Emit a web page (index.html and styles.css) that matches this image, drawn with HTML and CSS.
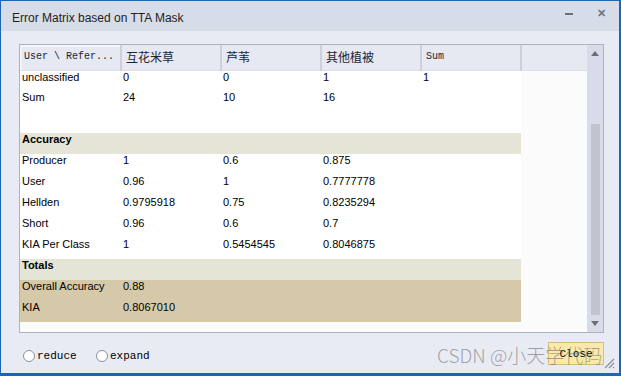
FILE: index.html
```html
<!DOCTYPE html>
<html lang="en">
<head>
    <meta charset="UTF-8">
    <title>Error Matrix based on TTA Mask</title>
    <link rel="stylesheet" href="styles.css">
</head>
<body>
    <div class="window">
        <div class="titlebar">
            <span class="title">Error Matrix based on TTA Mask</span>
            <span class="win-btn min"></span>
            <span class="win-btn close">&#x2715;</span>
        </div>

        <div class="content">
            <div class="grid">
                <div class="grid-main">
                    <table class="matrix">
                        <colgroup>
                            <col class="c-first"><col class="c"><col class="c"><col class="c"><col class="c"><col class="c-fill">
                        </colgroup>
                        <thead>
                            <tr>
                                <th class="mono">User \ Refer...</th>
                                <th class="cjk">互花米草</th>
                                <th class="cjk">芦苇</th>
                                <th class="cjk">其他植被</th>
                                <th class="mono">Sum</th>
                                <th class="fill"></th>
                            </tr>
                        </thead>
                        <tbody>
                            <tr><td>unclassified</td><td>0</td><td>0</td><td>1</td><td>1</td><td class="fill"></td></tr>
                            <tr><td>Sum</td><td>24</td><td>10</td><td>16</td><td></td><td class="fill"></td></tr>
                            <tr><td></td><td></td><td></td><td></td><td></td><td class="fill"></td></tr>
                            <tr class="section"><td>Accuracy</td><td></td><td></td><td></td><td></td><td class="fill"></td></tr>
                            <tr><td>Producer</td><td>1</td><td>0.6</td><td>0.875</td><td></td><td class="fill"></td></tr>
                            <tr><td>User</td><td>0.96</td><td>1</td><td>0.7777778</td><td></td><td class="fill"></td></tr>
                            <tr><td>Hellden</td><td>0.9795918</td><td>0.75</td><td>0.8235294</td><td></td><td class="fill"></td></tr>
                            <tr><td>Short</td><td>0.96</td><td>0.6</td><td>0.7</td><td></td><td class="fill"></td></tr>
                            <tr><td>KIA Per Class</td><td>1</td><td>0.5454545</td><td>0.8046875</td><td></td><td class="fill"></td></tr>
                            <tr class="section"><td>Totals</td><td></td><td></td><td></td><td></td><td class="fill"></td></tr>
                            <tr class="total"><td>Overall Accuracy</td><td>0.88</td><td></td><td></td><td></td><td class="fill"></td></tr>
                            <tr class="total"><td>KIA</td><td>0.8067010</td><td></td><td></td><td></td><td class="fill"></td></tr>
                        </tbody>
                    </table>
                </div>
                <div class="scrollbar">
                    <span class="arrow up"></span>
                    <div class="track"><div class="thumb"></div></div>
                    <span class="arrow down"></span>
                </div>
            </div>

            <div class="footer">
                <label class="radio"><span class="dot"></span>reduce</label>
                <label class="radio"><span class="dot"></span>expand</label>
                <button class="close-btn">Close</button>
            </div>
        </div>

        <div class="watermark">CSDN @小天学代码</div>
        <svg class="grip" width="12" height="12" viewBox="0 0 12 12">
            <path d="M11 2 L2 11 M11 6 L6 11 M11 10 L10 11" stroke="#8a8e98" stroke-width="1.2"/>
        </svg>
    </div>
</body>
</html>
```

FILE: styles.css
```css
body {
    margin: 0;
    font-family: "Liberation Sans", Arial, sans-serif;
}

.window {
    position: relative;
    width: 621px;
    height: 376px;
    box-sizing: border-box;
    border: 1px solid #1d67b2;
    border-width: 1px 2px 3px 1px;
    background: #e9ebf4;
    display: flex;
    flex-direction: column;
}

.titlebar {
    height: 30px;
    background: #d7dce9;
    display: flex;
    align-items: center;
    padding-left: 11px;
    flex-shrink: 0;
}

.title {
    flex: 1;
    font-size: 12px;
    color: #1e1e1e;
    padding-top: 3px;
}

.win-btn {
    width: 33px;
    height: 24px;
    display: flex;
    justify-content: center;
    align-items: center;
    color: #707580;
    margin-top: -6px;
}

.win-btn.min::before {
    content: "";
    width: 8px;
    height: 2px;
    margin-top: 2px;
    background: #6b6f78;
}

.win-btn.close {
    font-size: 11px;
    font-weight: bold;
    margin-right: 1px;
}

.content {
    flex: 1;
    padding: 13px 15px 0 18px;
    display: flex;
    flex-direction: column;
}

.grid {
    height: 289px;
    box-sizing: border-box;
    border: 1px solid #aeb3c0;
    background: #fbfbfb;
    display: flex;
}

.grid-main {
    flex: 1;
    overflow: hidden;
}

.matrix {
    table-layout: fixed;
    border-collapse: collapse;
    width: 567px;
    font-size: 11px;
    color: #000;
}

.c-first { width: 101px; }
.c { width: 100px; }
.c-fill { width: 66px; }

.matrix th {
    height: 25px;
    box-sizing: border-box;
    padding: 0 0 1px 4px;
    background: #e6e8f2;
    border-right: 2px solid #ccd0db;
    border-bottom: 1px solid #dde0ea;
    text-align: left;
    font-weight: normal;
    color: #1c2633;
    white-space: nowrap;
    overflow: hidden;
    line-height: 14px;
}

.matrix th:first-child {
    box-shadow: inset 2px 2px 0 #f3f4f8;
}

.matrix th.fill {
    border-right: none;
}

.mono {
    font-family: "Liberation Mono", "Courier New", monospace;
    font-size: 10px;
}

.cjk {
    font-family: "Noto Sans CJK SC", sans-serif;
    font-size: 12px;
}

.matrix td {
    height: 21px;
    box-sizing: border-box;
    padding: 0 0 0 2px;
    vertical-align: top;
    line-height: 13px;
    background: #fff;
    white-space: nowrap;
    overflow: hidden;
}

.matrix .section td {
    background: #e4e5d6;
    font-weight: bold;
}

.matrix .total td {
    background: #d6c9a9;
}

.matrix tr td.fill {
    background: #fbfbfb;
}

.scrollbar {
    width: 16px;
    background: #d8dcea;
    display: flex;
    flex-direction: column;
    align-items: center;
}

.arrow {
    width: 0;
    height: 0;
    border-left: 4px solid transparent;
    border-right: 4px solid transparent;
    margin: 6px 0;
}

.arrow.up {
    border-bottom: 5px solid #6b6e75;
}

.arrow.down {
    border-top: 5px solid #6b6e75;
}

.track {
    flex: 1;
    width: 9px;
    display: flex;
    flex-direction: column;
    justify-content: flex-end;
}

.thumb {
    height: 191px;
    background: #c1c4cd;
}

.footer {
    margin-top: 9px;
    height: 23px;
    display: flex;
    align-items: center;
}

.radio {
    display: flex;
    align-items: center;
    font-family: "Liberation Mono", "Courier New", monospace;
    font-size: 11px;
    color: #000;
    margin: 5px 0 0 4px;
    width: 69px;
}

.dot {
    width: 10px;
    height: 10px;
    border: 1px solid #8a909c;
    border-radius: 50%;
    background: #fff;
    margin-right: 2px;
}

.close-btn {
    margin-left: auto;
    width: 56px;
    height: 23px;
    background: #fbe9aa;
    border: 1px solid #d4bd76;
    font-family: "Liberation Mono", "Courier New", monospace;
    font-size: 11px;
    color: #000;
    padding: 0;
}

.watermark {
    position: absolute;
    left: 436px;
    top: 340px;
    font-family: "Noto Sans CJK SC", sans-serif;
    font-weight: 300;
    font-size: 19px;
    color: rgba(110, 110, 110, 0.6);
    pointer-events: none;
}

.grip {
    position: absolute;
    right: 4px;
    bottom: 4px;
}
```
